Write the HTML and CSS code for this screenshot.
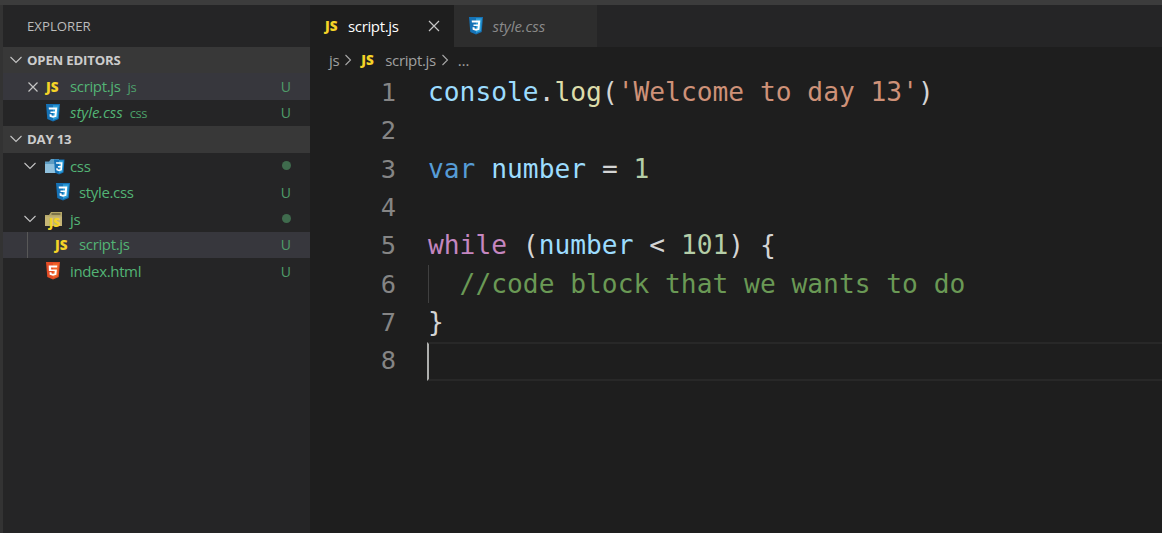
FILE: index.html
```html
<!DOCTYPE html>
<html lang="en">
<head>
<meta charset="utf-8">
<title>script.js - day 13</title>
<link rel="stylesheet" href="styles.css">
</head>
<body>
<svg class="defs" width="0" height="0" aria-hidden="true">
  <defs>
    <symbol id="css3" viewBox="0 0 16 18">
      <path fill="#1572b6" d="M1 0h14l-1.300 15L8 17.600 2.300 15z"/>
      <path fill="#2f9fd8" d="M8 1.200h5.800l-1 12.800L8 16z"/>
      <path fill="#fff" d="M3.700 3.500h8.600l-.9 9.200L8 13.800l-3.300-1.100-.2-2.500h2l.1 1.200 1.400.4 1.500-.4.200-2.300H5.500V7.400h4.400l.2-1.900H3.900z"/>
    </symbol>
    <symbol id="html5" viewBox="0 0 16 18">
      <path fill="#e44d26" d="M1 0h14l-1.300 15L8 17.600 2.300 15z"/>
      <path fill="#f16529" d="M8 1.200h5.800l-1 12.800L8 16z"/>
      <path fill="#fff" d="M3.700 3.500h8.600l-.2 2H6l.2 2h5.700l-.5 5.200L8 13.800l-3.300-1.100-.2-2.500h2l.1 1.200 1.400.4 1.500-.4.200-2.300H3.900z"/>
    </symbol>
    <symbol id="chev" viewBox="0 0 16 16">
      <path fill="none" stroke="currentColor" stroke-width="1.100" d="M2.500 5l5.500 5.500L13.500 5"/>
    </symbol>
  </defs>
</svg>
<div class="topline"></div>
<main class="window">
  <aside class="sidebar">
    <div class="explorer-title">EXPLORER</div>
    <div class="section"><svg class="chev"><use href="#chev"/></svg><span>OPEN EDITORS</span></div>
    <div class="row focused indent-open">
      <svg class="close" viewBox="0 0 12 12"><path d="M1.500 1.500l9 9M10.500 1.500l-9 9"/></svg>
      <span class="js">JS</span><span class="name">script.js</span><span class="desc">js</span><span class="status">U</span>
    </div>
    <div class="row indent-editor">
      <svg class="file-icon"><use href="#css3"/></svg>
      <span class="name italic">style.css</span><span class="desc">css</span><span class="status">U</span>
    </div>
    <div class="section"><svg class="chev"><use href="#chev"/></svg><span>DAY 13</span></div>
    <div class="row indent-folder">
      <svg class="chev small"><use href="#chev"/></svg>
      <svg class="folder-icon" viewBox="0 0 20 18">
        <path fill="#5d9cc2" d="M0 4.500h4l2-2.500h8v14H0z"/>
        <path fill="#8fc0dc" d="M0 7h11v9H0z"/>
        <path fill="#1572b6" d="M9 2.500h10.500l-1 13L14 17.500 10 15.500z"/>
        <path fill="#2f9fd8" d="M14 3.500h4.500l-.8 11.300-3.700 1.500z"/>
        <path fill="#fff" d="M11 5.200h6.500l-.6 8-2.900 1.100-2.600-1-.2-2h1.500l.1 1 1.200.3 1.300-.3.200-1.900h-2.600V9h2.700l.1-2.200H11.200z"/>
      </svg>
      <span class="name folder-name">css</span><span class="dot"></span>
    </div>
    <div class="row indent-file">
      <svg class="file-icon tight"><use href="#css3"/></svg>
      <span class="name">style.css</span><span class="status">U</span>
    </div>
    <div class="row indent-folder">
      <svg class="chev small"><use href="#chev"/></svg>
      <svg class="folder-icon" viewBox="0 0 20 18">
        <path fill="#b5a768" d="M0 5h4l2-3h11v5H0z"/>
        <path fill="#7d7449" d="M6.500 3h9v2h-9z"/>
        <path fill="#c4b575" d="M0 6.500h17V16H0z"/>
      </svg>
      <span class="folder-js">JS</span>
      <span class="name folder-name">js</span><span class="dot"></span>
    </div>
    <div class="row selected indent-file guide">
      <span class="js">JS</span><span class="name">script.js</span><span class="status">U</span>
    </div>
    <div class="row indent-editor">
      <svg class="file-icon"><use href="#html5"/></svg>
      <span class="name">index.html</span><span class="status">U</span>
    </div>
  </aside>
  <section class="editor">
    <div class="tabs">
      <div class="tab active"><span class="js">JS</span><span class="tab-name">script.js</span>
        <svg class="tab-close" viewBox="0 0 12 12"><path d="M1 1l10 10M11 1L1 11"/></svg>
      </div>
      <div class="tab inactive"><svg class="file-icon"><use href="#css3"/></svg><span class="tab-name">style.css</span></div>
    </div>
    <nav class="crumbs">
      <span>js</span>
      <svg class="crumb-sep" viewBox="0 0 8 12"><path d="M1.500 1l5 5-5 5"/></svg>
      <span class="js">JS</span><span>script.js</span>
      <svg class="crumb-sep" viewBox="0 0 8 12"><path d="M1.500 1l5 5-5 5"/></svg>
      <span>…</span>
    </nav>
    <div class="code">
      <div class="line"><span class="num">1</span><span class="src"><span class="v">console</span><span class="p">.</span><span class="f">log</span><span class="p">(</span><span class="s">'Welcome to day 13'</span><span class="p">)</span></span></div>
      <div class="line"><span class="num">2</span><span class="src"></span></div>
      <div class="line"><span class="num">3</span><span class="src"><span class="k">var</span> <span class="v">number</span> <span class="p">=</span> <span class="n">1</span></span></div>
      <div class="line"><span class="num">4</span><span class="src"></span></div>
      <div class="line"><span class="num">5</span><span class="src"><span class="c">while</span> <span class="p">(</span><span class="v">number</span> <span class="p">&lt;</span> <span class="n">101</span><span class="p">) {</span></span></div>
      <div class="line"><span class="num">6</span><span class="src indent-guide">  <span class="g">//code block that we wants to do</span></span></div>
      <div class="line"><span class="num">7</span><span class="src"><span class="p">}</span></span></div>
      <div class="line"><span class="num">8</span><span class="src current"></span></div>
    </div>
  </section>
</main>
</body>
</html>
```
FILE: styles.css
```css
* { box-sizing: border-box; }
html, body { margin: 0; height: 100%; overflow: hidden; background: #1e1e1e; }
body { display: flex; flex-direction: column; font-family: "Open Sans", "Noto Sans", sans-serif; }
.defs { position: absolute; }
.topline { height: 5px; background: #3c3c3c; flex: none; }
.window { flex: 1; display: flex; min-height: 0; }

.sidebar { width: 310px; flex: none; border-left: 3px solid #333; background: #252526; color: #ccc; }
.explorer-title { height: 42px; padding-left: 24px; display: flex; align-items: center; font-size: 13.200px; color: #bbb; }
.section { height: 26.400px; display: flex; align-items: center; background: #383838; font-size: 13.200px; font-weight: 700; color: #ccc; letter-spacing: -.2px; }
.chev { width: 16px; height: 16px; margin: 0 3px 0 5px; color: #c5c5c5; flex: none; }
.chev.small { margin: 0 7px 0 0; }

.row { height: 26.400px; display: flex; align-items: center; font-size: 15px; letter-spacing: -.35px; color: #53b475; padding-right: 19px; position: relative; }
.focused { background: #37373d; }
.selected { background: #37373d; }
.indent-open { padding-left: 24px; }
.indent-editor { padding-left: 42px; }
.indent-folder { padding-left: 19px; }
.indent-file { padding-left: 52px; }
.guide::before { content: ""; position: absolute; left: 24px; top: 0; bottom: 0; width: 1px; background: #585858; }

.close { width: 12px; height: 12px; margin-right: 7px; flex: none; }
.close path, .tab-close path { stroke: #c5c5c5; stroke-width: 1.200; fill: none; }
.js { color: #f5d327; font-weight: 800; font-size: 13.500px; letter-spacing: 0; width: 15px; flex: none; margin-right: 9px; font-family: "Open Sans", sans-serif; }
.file-icon { width: 16px; height: 18px; margin-right: 9px; flex: none; }
.file-icon.tight { margin-right: 8px; }
.folder-icon { width: 20px; height: 18px; margin-right: 5px; flex: none; }
.folder-js { position: absolute; left: 46px; top: 9px; color: #f5d327; font-size: 12px; font-weight: 800; letter-spacing: 0; }
.name { white-space: nowrap; margin-top: -1px; }
.folder-name { margin-top: 0; }
.italic { font-style: italic; letter-spacing: -.05px; }
.desc { font-size: 13px; margin-left: 7px; opacity: .85; }
.status { margin-left: auto; font-size: 14px; color: #4f9d69; letter-spacing: 0; }
.dot { margin-left: auto; width: 9px; height: 9px; border-radius: 50%; background: #3f6b4d; }

.editor { flex: 1; min-width: 0; display: flex; flex-direction: column; }
.tabs { height: 42px; display: flex; background: #252526; flex: none; }
.tab { width: 143.500px; display: flex; align-items: center; padding-left: 15px; }
.active { background: #1e1e1e; color: #fff; }
.inactive { background: #2d2d2d; color: #8a8a8a; font-style: italic; padding-left: 14px; }
.tab .js { margin-right: 8px; }
.tab-name { font-size: 15px; letter-spacing: -.35px; }
.inactive .tab-name { letter-spacing: -.05px; }
.tab-close { width: 12px; height: 12px; margin-left: auto; margin-right: 14px; }

.crumbs { height: 26px; flex: none; display: flex; align-items: center; padding-left: 19px; font-size: 15px; letter-spacing: -.35px; color: #a0a0a0; }
.crumbs .js { margin-right: 9px; }
.crumb-sep { width: 8px; height: 12px; margin: 0 9px 0 5px; }
.crumb-sep path { fill: none; stroke: #a8a8a8; stroke-width: 1.100; }

.code { font-family: "DejaVu Sans Mono", monospace; font-size: 26.250px; flex: 1; }
.line { height: 38.330px; display: flex; position: relative; line-height: 38.330px; }
.num { width: 86px; flex: none; text-align: right; color: #858585; font-size: 25.400px; }
.src { margin-left: 32px; white-space: pre; color: #d4d4d4; flex: 1; position: relative; }
.current { border-top: 2px solid #282828; border-bottom: 2px solid #282828; border-left: 2px solid #aeafad; margin: 1px 0 -1px 31px; }
.indent-guide::before { content: ""; position: absolute; left: 0; top: 0; bottom: 0; width: 1px; background: #404040; }
.v { color: #9cdcfe; }
.f { color: #dcdcaa; }
.s { color: #ce9178; }
.k { color: #569cd6; }
.c { color: #c586c0; }
.n { color: #b5cea8; }
.g { color: #6a9955; }
.p { color: #d4d4d4; }
```
